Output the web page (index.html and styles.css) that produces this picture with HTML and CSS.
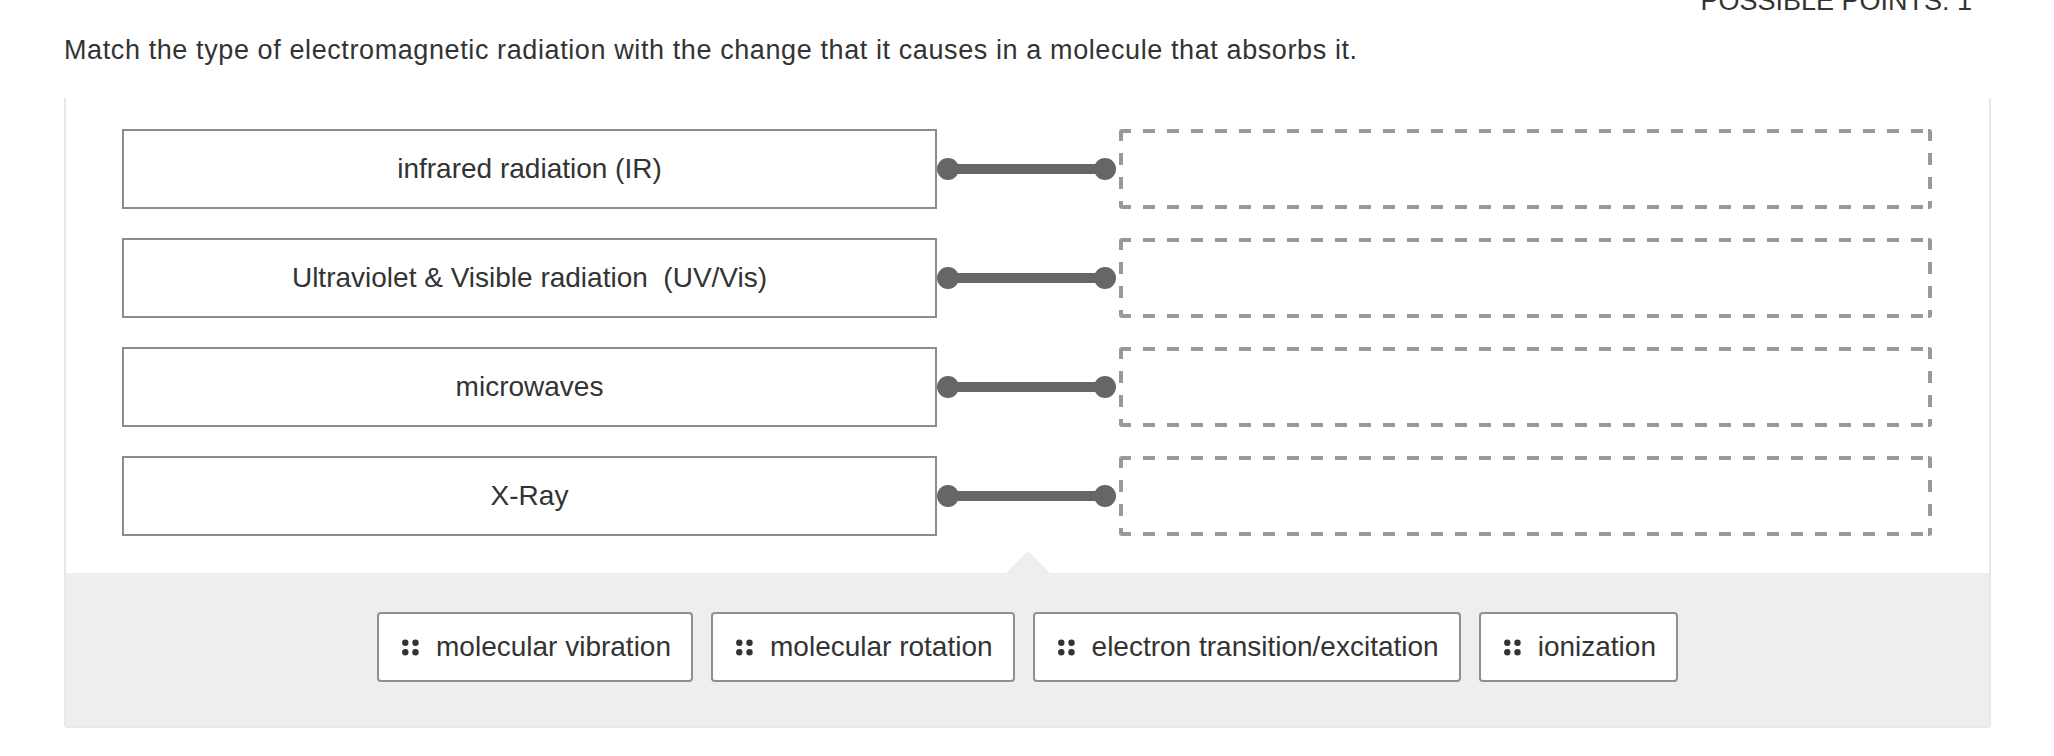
FILE: index.html
```html
<!DOCTYPE html>
<html lang="en">
<head>
<meta charset="utf-8">
<title>Matching question</title>
<link rel="stylesheet" href="styles.css">
</head>
<body>
<div class="page">
  <div class="points">POSSIBLE POINTS: 1</div>
  <p class="question">Match the type of electromagnetic radiation with the change that it causes in a molecule that absorbs it.</p>
  <div class="panel">
    <div class="rows">
      <div class="row">
        <div class="prompt">infrared radiation (IR)</div>
        <svg class="connector" width="182" height="24" viewBox="0 0 182 24"><line x1="11" y1="12" x2="168" y2="12" stroke="#666" stroke-width="10"/><circle cx="11" cy="12" r="11" fill="#666"/><circle cx="168" cy="12" r="11" fill="#666"/></svg>
        <div class="drop"></div>
      </div>
      <div class="row">
        <div class="prompt">Ultraviolet &amp; Visible radiation&nbsp; (UV/Vis)</div>
        <svg class="connector" width="182" height="24" viewBox="0 0 182 24"><line x1="11" y1="12" x2="168" y2="12" stroke="#666" stroke-width="10"/><circle cx="11" cy="12" r="11" fill="#666"/><circle cx="168" cy="12" r="11" fill="#666"/></svg>
        <div class="drop"></div>
      </div>
      <div class="row">
        <div class="prompt">microwaves</div>
        <svg class="connector" width="182" height="24" viewBox="0 0 182 24"><line x1="11" y1="12" x2="168" y2="12" stroke="#666" stroke-width="10"/><circle cx="11" cy="12" r="11" fill="#666"/><circle cx="168" cy="12" r="11" fill="#666"/></svg>
        <div class="drop"></div>
      </div>
      <div class="row">
        <div class="prompt">X-Ray</div>
        <svg class="connector" width="182" height="24" viewBox="0 0 182 24"><line x1="11" y1="12" x2="168" y2="12" stroke="#666" stroke-width="10"/><circle cx="11" cy="12" r="11" fill="#666"/><circle cx="168" cy="12" r="11" fill="#666"/></svg>
        <div class="drop"></div>
      </div>
    </div>
    <div class="bank">
      <div class="chip"><svg class="grip" width="17" height="17" viewBox="0 0 17 17"><circle cx="3.3" cy="3.8" r="3.2" fill="#333"/><circle cx="13.5" cy="3.8" r="3.2" fill="#333"/><circle cx="3.3" cy="13.2" r="3.2" fill="#333"/><circle cx="13.5" cy="13.2" r="3.2" fill="#333"/></svg><span>molecular vibration</span></div>
      <div class="chip"><svg class="grip" width="17" height="17" viewBox="0 0 17 17"><circle cx="3.3" cy="3.8" r="3.2" fill="#333"/><circle cx="13.5" cy="3.8" r="3.2" fill="#333"/><circle cx="3.3" cy="13.2" r="3.2" fill="#333"/><circle cx="13.5" cy="13.2" r="3.2" fill="#333"/></svg><span>molecular rotation</span></div>
      <div class="chip"><svg class="grip" width="17" height="17" viewBox="0 0 17 17"><circle cx="3.3" cy="3.8" r="3.2" fill="#333"/><circle cx="13.5" cy="3.8" r="3.2" fill="#333"/><circle cx="3.3" cy="13.2" r="3.2" fill="#333"/><circle cx="13.5" cy="13.2" r="3.2" fill="#333"/></svg><span>electron transition/excitation</span></div>
      <div class="chip"><svg class="grip" width="17" height="17" viewBox="0 0 17 17"><circle cx="3.3" cy="3.8" r="3.2" fill="#333"/><circle cx="13.5" cy="3.8" r="3.2" fill="#333"/><circle cx="3.3" cy="13.2" r="3.2" fill="#333"/><circle cx="13.5" cy="13.2" r="3.2" fill="#333"/></svg><span>ionization</span></div>
    </div>
  </div>
</div>
</body>
</html>
```

FILE: styles.css
```css
html, body {
  margin: 0;
  padding: 0;
  background: #fff;
}

body {
  font-family: "Liberation Sans", Arial, Helvetica, sans-serif;
  color: #333;
  overflow: hidden;
}

.page {
  padding: 0 63px 0 64px;
}

.points {
  margin-top: -12px;
  margin-right: 19px;
  text-align: right;
  font-size: 27px;
  line-height: 27px;
  color: #333;
}

.question {
  margin: 22px 0 0 0;
  font-size: 27px;
  line-height: 27px;
  letter-spacing: 0.6px;
}

.panel {
  margin-top: 34px;
  border: 2px solid #e8e8e8;
  border-top: none;
  border-radius: 0 0 4px 4px;
}

.rows {
  display: flex;
  flex-direction: column;
  gap: 29px;
  padding: 31px 56px 37px 56px;
}

.row {
  display: flex;
  align-items: center;
  height: 80px;
}

.prompt {
  box-sizing: border-box;
  width: 815px;
  height: 80px;
  border: 2px solid #8c8c8c;
  display: flex;
  align-items: center;
  justify-content: center;
  font-size: 28px;
  color: #333;
}

.connector {
  flex: none;
  display: block;
}

.drop {
  box-sizing: border-box;
  width: 813px;
  height: 80px;
  border-radius: 3px;
  background:
    repeating-linear-gradient(90deg, #999 0 12px, transparent 12px 24px) left top / 100% 4px no-repeat,
    repeating-linear-gradient(90deg, #999 0 12px, transparent 12px 24px) left bottom / 100% 4px no-repeat,
    repeating-linear-gradient(180deg, #999 0 12px, transparent 12px 24px) left top / 4px 100% no-repeat,
    repeating-linear-gradient(180deg, #999 0 12px, transparent 12px 24px) right top / 4px 100% no-repeat;
}

.bank {
  position: relative;
  background: #eeeeee;
  display: flex;
  justify-content: center;
  gap: 18px;
  padding: 39px 0 44px 0;
}

.bank::before {
  content: "";
  position: absolute;
  top: -22px;
  left: 50%;
  margin-left: -22px;
  border-left: 22px solid transparent;
  border-right: 22px solid transparent;
  border-bottom: 22px solid #eeeeee;
}

.chip {
  box-sizing: border-box;
  height: 70px;
  background: #fff;
  border: 2px solid #8f8f8f;
  border-radius: 4px;
  display: flex;
  align-items: center;
  gap: 17px;
  padding: 0 20px 0 23px;
  font-size: 28px;
  color: #333;
}

.grip {
  display: block;
  flex: none;
}
```
